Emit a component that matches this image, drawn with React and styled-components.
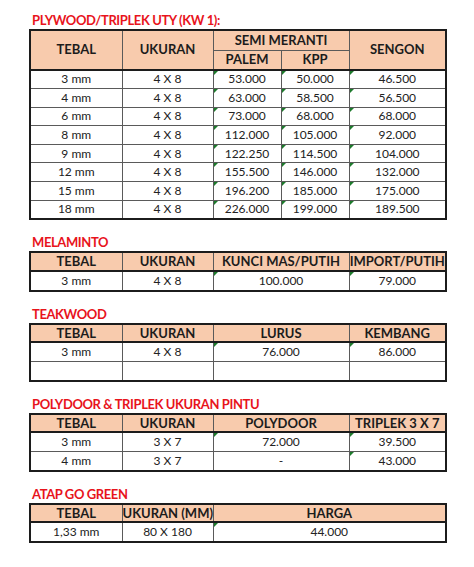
import React from 'react';
import styled, { createGlobalStyle, css } from 'styled-components';

const Global = createGlobalStyle`
  html, body { margin: 0; padding: 0; background: #fff; }
  body { font-family: Lato, "Liberation Sans", sans-serif; color: #1c1c1c; }
`;

const Page = styled.div`
  width: 474px;
  min-height: 567px;
  box-sizing: border-box;
  padding: 12px 0 0 29px;
  display: flex;
  flex-direction: column;
  gap: 14px;
`;

const Section = styled.section`
  display: flex;
  flex-direction: column;
  gap: 1px;
`;

const Title = styled.h2`
  margin: 0;
  padding-left: 3px;
  font-size: 13px;
  line-height: 16px;
  font-weight: 700;
  letter-spacing: -0.4px;
  color: #e8141c;
`;

const Table = styled.table`
  border-collapse: collapse;
  table-layout: fixed;
  width: 416px;
  border: 2px solid #1c1c1c;
`;

const Head = styled.th`
  position: relative;
  background: #f8cbad;
  font-weight: 700;
  font-size: 13px;
  line-height: 1;
  height: ${(p) => p.$h || 16.8}px;
  padding: 0;
  border: 1px solid #5a5a5a;
  ${(p) => p.$last && css`border-bottom: 2px solid #1c1c1c;`}
  text-align: center;
  vertical-align: middle;
  white-space: nowrap;
  color: #1c1c1c;
`;

const Cell = styled.td`
  position: relative;
  font-size: 12px;
  line-height: 1;
  height: 17.6px;
  padding: 0;
  border: 1px solid #5a5a5a;
  text-align: center;
  vertical-align: middle;
  white-space: nowrap;
  color: #222;
  ${(p) =>
    p.$flag &&
    css`
      &::before {
        content: '';
        position: absolute;
        left: 0;
        top: 0;
        border-style: solid;
        border-width: 4px 4px 0 0;
        border-color: #1d7b2c transparent transparent transparent;
      }
    `}
`;

const Cols = ({ widths }) => (
  <colgroup>
    {widths.map((w, i) => (
      <col key={i} style={{ width: w }} />
    ))}
  </colgroup>
);

const plywood = [
  ['3 mm', '4 X 8', '53.000', '50.000', '46.500'],
  ['4 mm', '4 X 8', '63.000', '58.500', '56.500'],
  ['6 mm', '4 X 8', '73.000', '68.000', '68.000'],
  ['8 mm', '4 X 8', '112.000', '105.000', '92.000'],
  ['9 mm', '4 X 8', '122.250', '114.500', '104.000'],
  ['12 mm', '4 X 8', '155.500', '146.000', '132.000'],
  ['15 mm', '4 X 8', '196.200', '185.000', '175.000'],
  ['18 mm', '4 X 8', '226.000', '199.000', '189.500'],
];

const simpleTables = [
  {
    title: 'MELAMINTO',
    widths: [92, 91, 136, 97],
    head: ['TEBAL', 'UKURAN', 'KUNCI MAS/PUTIH', 'IMPORT/PUTIH'],
    rows: [[['3 mm'], ['4 X 8'], ['100.000', 1], ['79.000', 1]]],
  },
  {
    title: 'TEAKWOOD',
    widths: [92, 91, 136, 97],
    head: ['TEBAL', 'UKURAN', 'LURUS', 'KEMBANG'],
    rows: [
      [['3 mm'], ['4 X 8'], ['76.000', 1], ['86.000', 1]],
      [[''], [''], [''], ['']],
    ],
  },
  {
    title: 'POLYDOOR & TRIPLEK UKURAN PINTU',
    widths: [92, 91, 136, 97],
    head: ['TEBAL', 'UKURAN', 'POLYDOOR', 'TRIPLEK 3 X 7'],
    rows: [
      [['3 mm'], ['3 X 7'], ['72.000', 1], ['39.500', 1]],
      [['4 mm'], ['3 X 7'], ['-'], ['43.000', 1]],
    ],
  },
  {
    title: 'ATAP GO GREEN',
    widths: [92, 91, 233],
    head: ['TEBAL', 'UKURAN (MM)', 'HARGA'],
    rows: [[['1,33 mm'], ['80 X 180'], ['44.000', 1]]],
  },
];

export default function App() {
  return (
    <>
      <Global />
      <Page>
        <Section>
          <Title>PLYWOOD/TRIPLEK UTY (KW 1):</Title>
          <Table>
            <Cols widths={[92, 91, 68, 68, 97]} />
            <thead>
              <tr>
                <Head rowSpan={2} $last>TEBAL</Head>
                <Head rowSpan={2} $last>UKURAN</Head>
                <Head colSpan={2} $h={18.5}>SEMI MERANTI</Head>
                <Head rowSpan={2} $last>SENGON</Head>
              </tr>
              <tr>
                <Head $last $h={18}>PALEM</Head>
                <Head $last $h={18}>KPP</Head>
              </tr>
            </thead>
            <tbody>
              {plywood.map((r, i) => (
                <tr key={i}>
                  <Cell>{r[0]}</Cell>
                  <Cell>{r[1]}</Cell>
                  <Cell $flag>{r[2]}</Cell>
                  <Cell $flag>{r[3]}</Cell>
                  <Cell $flag>{r[4]}</Cell>
                </tr>
              ))}
            </tbody>
          </Table>
        </Section>
        {simpleTables.map((t) => (
          <Section key={t.title}>
            <Title>{t.title}</Title>
            <Table>
              <Cols widths={t.widths} />
              <thead>
                <tr>
                  {t.head.map((h) => (
                    <Head key={h} $last>{h}</Head>
                  ))}
                </tr>
              </thead>
              <tbody>
                {t.rows.map((r, i) => (
                  <tr key={i}>
                    {r.map(([v, f], j) => (
                      <Cell key={j} $flag={!!f}>{v}</Cell>
                    ))}
                  </tr>
                ))}
              </tbody>
            </Table>
          </Section>
        ))}
      </Page>
    </>
  );
}
